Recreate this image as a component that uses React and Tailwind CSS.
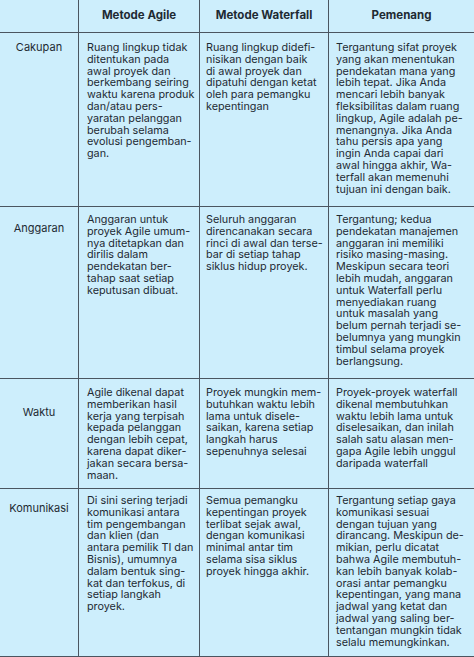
import React from "react";

const rows = [
  {
    label: "Cakupan",
    rowH: "h-[174px]",
    labelPt: "pt-[9px]",
    textPt: "pt-[9px]",
    agile: [
      "Ruang lingkup tidak",
      "ditentukan pada",
      "awal proyek dan",
      "berkembang seiring",
      "waktu karena produk",
      "dan/atau pers-",
      "yaratan pelanggan",
      "berubah selama",
      "evolusi pengemban-",
      "gan.",
    ],
    waterfall: [
      "Ruang lingkup didefi-",
      "nisikan dengan baik",
      "di awal proyek dan",
      "dipatuhi dengan ketat",
      "oleh para pemangku",
      "kepentingan",
    ],
    winner: [
      "Tergantung sifat proyek",
      "yang akan menentukan",
      "pendekatan mana yang",
      "lebih tepat. Jika Anda",
      "mencari lebih banyak",
      "fleksibilitas dalam ruang",
      "lingkup, Agile adalah pe-",
      "menangnya. Jika Anda",
      "tahu persis apa yang",
      "ingin Anda capai dari",
      "awal hingga akhir, Wa-",
      "terfall akan memenuhi",
      "tujuan ini dengan baik.",
    ],
  },
  {
    label: "Anggaran",
    rowH: "h-[172px]",
    labelPt: "pt-[16px]",
    textPt: "pt-[7px]",
    agile: [
      "Anggaran untuk",
      "proyek Agile umum-",
      "nya ditetapkan dan",
      "dirilis dalam",
      "pendekatan ber-",
      "tahap saat setiap",
      "keputusan dibuat.",
    ],
    waterfall: [
      "Seluruh anggaran",
      "direncanakan secara",
      "rinci di awal dan terse-",
      "bar di setiap tahap",
      "siklus hidup proyek.",
    ],
    winner: [
      "Tergantung; kedua",
      "pendekatan manajemen",
      "anggaran ini memiliki",
      "risiko masing-masing.",
      "Meskipun secara teori",
      "lebih mudah, anggaran",
      "untuk Waterfall perlu",
      "menyediakan ruang",
      "untuk masalah yang",
      "belum pernah terjadi se-",
      "belumnya yang mungkin",
      "timbul selama proyek",
      "berlangsung.",
    ],
  },
  {
    label: "Waktu",
    rowH: "h-[110px]",
    labelPt: "pt-[28px]",
    textPt: "pt-[8px]",
    agile: [
      "Agile dikenal dapat",
      "memberikan hasil",
      "kerja yang terpisah",
      "kepada pelanggan",
      "dengan lebih cepat,",
      "karena dapat diker-",
      "jakan secara bersa-",
      "maan.",
    ],
    waterfall: [
      "Proyek mungkin mem-",
      "butuhkan waktu lebih",
      "lama untuk disele-",
      "saikan, karena setiap",
      "langkah harus",
      "sepenuhnya selesai",
    ],
    winner: [
      "Proyek-proyek waterfall",
      "dikenal membutuhkan",
      "waktu lebih lama untuk",
      "diselesaikan, dan inilah",
      "salah satu alasan men-",
      "gapa Agile lebih unggul",
      "daripada waterfall",
    ],
  },
  {
    label: "Komunikasi",
    rowH: "h-[168px]",
    labelPt: "pt-[14px]",
    textPt: "pt-[6px]",
    agile: [
      "Di sini sering terjadi",
      "komunikasi antara",
      "tim pengembangan",
      "dan klien (dan",
      "antara pemilik TI dan",
      "Bisnis), umumnya",
      "dalam bentuk sing-",
      "kat dan terfokus, di",
      "setiap langkah",
      "proyek.",
    ],
    waterfall: [
      "Semua pemangku",
      "kepentingan proyek",
      "terlibat sejak awal,",
      "dengan komunikasi",
      "minimal antar tim",
      "selama sisa siklus",
      "proyek hingga akhir.",
    ],
    winner: [
      "Tergantung setiap gaya",
      "komunikasi sesuai",
      "dengan tujuan yang",
      "dirancang. Meskipun de-",
      "mikian, perlu dicatat",
      "bahwa Agile membutuh-",
      "kan lebih banyak kolab-",
      "orasi antar pemangku",
      "kepentingan, yang mana",
      "jadwal yang ketat dan",
      "jadwal yang saling ber-",
      "tentangan mungkin tidak",
      "selalu memungkinkan.",
    ],
  },
];

function Lines({ lines }) {
  return (
    <div className="whitespace-nowrap">
      {lines.map((l, i) => (
        <div key={i}>{l}</div>
      ))}
    </div>
  );
}

export default function App() {
  return (
    <div
      className="w-[474px] h-[657px] overflow-hidden bg-[#cdeefc] text-[#1e2a33] text-[10.8px] leading-[11.8px]"
      style={{ fontFamily: "Inter, 'Open Sans', sans-serif" }}
    >
      <div className="grid grid-cols-[79px_121px_129px_145px]">
        <div className="h-[33px] border-r border-b border-[#4b5560]" />
        <div className="h-[33px] border-r border-b border-[#4b5560] flex items-center justify-center font-bold text-[11.5px]">
          Metode Agile
        </div>
        <div className="h-[33px] border-r border-b border-[#4b5560] flex items-center justify-center font-bold text-[11.5px]">
          Metode Waterfall
        </div>
        <div className="h-[33px] border-b border-[#4b5560] flex items-center justify-center font-bold text-[11.5px]">
          Pemenang
        </div>

        {rows.map((r) => (
          <React.Fragment key={r.label}>
            <div className={`${r.rowH} ${r.labelPt} border-r border-b border-[#4b5560] text-center text-[11px]`}>
              {r.label}
            </div>
            <div className={`${r.rowH} ${r.textPt} pl-[8px] border-r border-b border-[#4b5560]`}>
              <Lines lines={r.agile} />
            </div>
            <div className={`${r.rowH} ${r.textPt} pl-[6px] border-r border-b border-[#4b5560]`}>
              <Lines lines={r.waterfall} />
            </div>
            <div className={`${r.rowH} ${r.textPt} pl-[7px] border-b border-[#4b5560]`}>
              <Lines lines={r.winner} />
            </div>
          </React.Fragment>
        ))}
      </div>
    </div>
  );
}
